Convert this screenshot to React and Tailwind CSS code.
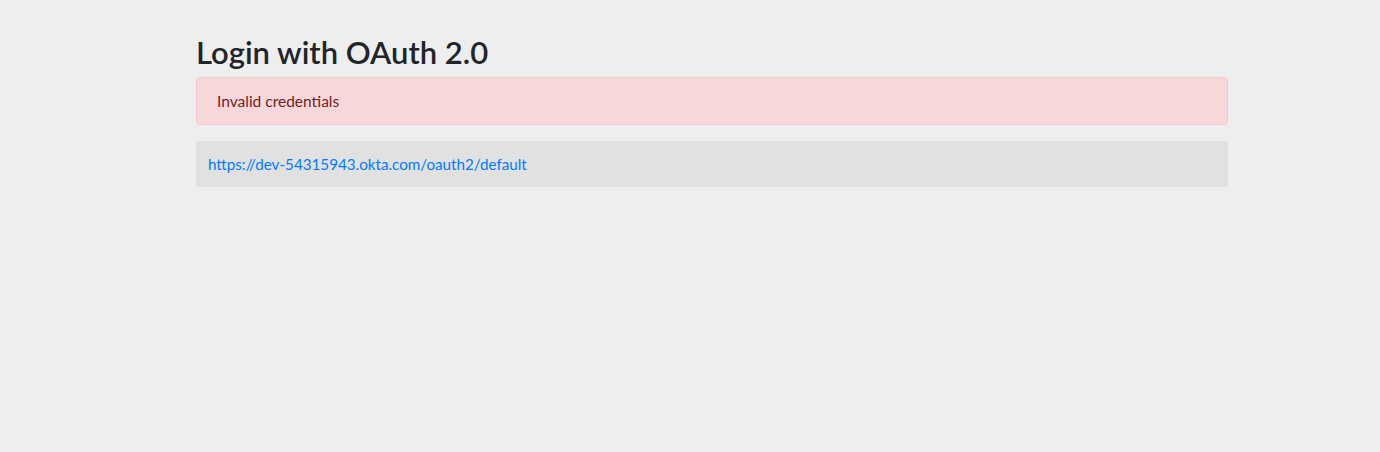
export default function App() {
  return (
    <div
      className="min-h-[452px] w-full bg-[#eeeeee] pt-[34px] pl-[196px]"
      style={{ fontFamily: 'Lato, sans-serif' }}
    >
      <div className="w-[1032px]">
        <h2 className="mb-[6px] text-[31px] font-semibold leading-[1.2] text-[#212529]">Login with OAuth 2.0</h2>
        <div className="mb-4 rounded border border-[#f5c6cb] bg-[#f8d7da] px-5 py-[11px] text-[15.5px] leading-6 text-[#721c24]">
          Invalid credentials
        </div>
        <div className="bg-[#e1e1e1] px-3 py-[11px] text-[15.2px] leading-6">
          <a href="#" className="text-[#007bff]">
            https://dev-54315943.okta.com/oauth2/default
          </a>
        </div>
      </div>
    </div>
  );
}
